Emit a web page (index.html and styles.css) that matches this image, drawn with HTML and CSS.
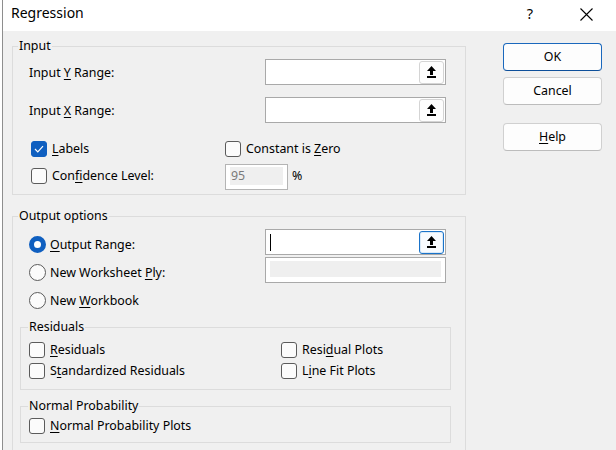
FILE: index.html
```html
<!DOCTYPE html>
<html lang="en">
<head>
<meta charset="utf-8">
<title>Regression</title>
<link rel="stylesheet" href="styles.css">
</head>
<body>
<div class="screen">
  <div class="edge"></div>
  <div class="dialog">
    <div class="titlebar">
      <span class="title">Regression</span>
      <span class="tb-help">?</span>
      <svg class="tb-close" width="13" height="13" viewBox="0 0 13 13"><path d="M0.5 0.5 L12.5 12.5 M12.5 0.5 L0.5 12.5" stroke="#000" stroke-width="1.1" fill="none"/></svg>
    </div>
    <div class="body">
      <div class="main">
        <fieldset class="group">
          <legend>Input</legend>
          <div class="range-row first">
            <span class="lbl">Input <u>Y</u> Range:</span>
            <div class="refbox">
              <span class="reftext"></span>
              <span class="refbtn"><svg width="9" height="12" viewBox="0 0 9 12"><path d="M4.5 0 L9 5 H6 V9 H3 V5 H0 Z" fill="#000"/><rect x="0" y="10" width="9" height="2" fill="#000"/></svg></span>
            </div>
          </div>
          <div class="range-row second">
            <span class="lbl">Input <u>X</u> Range:</span>
            <div class="refbox">
              <span class="reftext"></span>
              <span class="refbtn"><svg width="9" height="12" viewBox="0 0 9 12"><path d="M4.5 0 L9 5 H6 V9 H3 V5 H0 Z" fill="#000"/><rect x="0" y="10" width="9" height="2" fill="#000"/></svg></span>
            </div>
          </div>
          <div class="check-row labels-row">
            <label class="chk"><span class="box checked"><svg width="10" height="8" viewBox="0 0 10 8"><path d="M1 4 L3.8 6.8 L9 1.2" stroke="#fff" stroke-width="1.2" fill="none"/></svg></span><span><u>L</u>abels</span></label>
            <label class="chk"><span class="box"></span><span>Constant is <u>Z</u>ero</span></label>
          </div>
          <div class="check-row conf-row">
            <label class="chk"><span class="box"></span><span>Con<u>f</u>idence Level:</span></label>
            <div class="conf">
              <div class="numbox"><span class="numinner">95</span></div>
              <span class="pct">%</span>
            </div>
          </div>
        </fieldset>

        <fieldset class="group output">
          <legend>Output options</legend>
          <div class="radio-row first">
            <span class="rad"><span class="dot on"></span><span><u>O</u>utput Range:</span></span>
            <div class="refbox">
              <span class="reftext"><span class="caret"></span></span>
              <span class="refbtn focus"><svg width="9" height="12" viewBox="0 0 9 12"><path d="M4.5 0 L9 5 H6 V9 H3 V5 H0 Z" fill="#000"/><rect x="0" y="10" width="9" height="2" fill="#000"/></svg></span>
            </div>
          </div>
          <div class="radio-row">
            <span class="rad"><span class="dot"></span><span>New Worksheet <u>P</u>ly:</span></span>
            <div class="plybox"><span class="plyinner"></span></div>
          </div>
          <div class="radio-row">
            <span class="rad"><span class="dot"></span><span>New <u>W</u>orkbook</span></span>
          </div>

          <fieldset class="group sub residuals">
            <legend>Residuals</legend>
            <div class="sub-grid">
              <label class="chk"><span class="box"></span><span><u>R</u>esiduals</span></label>
              <label class="chk"><span class="box"></span><span>Resi<u>d</u>ual Plots</span></label>
              <label class="chk"><span class="box"></span><span>S<u>t</u>andardized Residuals</span></label>
              <label class="chk"><span class="box"></span><span>L<u>i</u>ne Fit Plots</span></label>
            </div>
          </fieldset>

          <fieldset class="group sub normal">
            <legend>Normal Probability</legend>
            <div class="sub-grid single">
              <label class="chk"><span class="box"></span><span><u>N</u>ormal Probability Plots</span></label>
            </div>
          </fieldset>
        </fieldset>
      </div>

      <div class="buttons">
        <span class="btn default">OK</span>
        <span class="btn">Cancel</span>
        <span class="btn help"><u>H</u>elp</span>
      </div>
    </div>
  </div>
</div>
</body>
</html>
```

FILE: styles.css
```css
* { box-sizing: border-box; }
html, body { margin: 0; padding: 0; }
body {
  width: 616px;
  height: 450px;
  overflow: hidden;
  font-family: "Segoe UI", "Noto Sans", sans-serif;
  font-size: 12.4px;
  color: #000;
  background: #f0f0f0;
}
u { text-decoration-thickness: 1px; text-underline-offset: 2px; }

.screen { display: flex; height: 450px; }
.edge { width: 3px; flex: none; background: #fff; border-right: 1px solid #8e8e8e; }
.dialog { flex: 1; display: flex; flex-direction: column; min-width: 0; }

.titlebar {
  height: 31px;
  flex: none;
  background: #fff;
  display: flex;
  align-items: flex-start;
  padding: 3px 23px 0 8px;
}
.title { font-size: 14px; line-height: 20px; }
.tb-help { margin-left: auto; font-size: 14.5px; line-height: 20px; }
.tb-close { margin: 5px 0 0 47px; }

.body {
  flex: 1;
  display: flex;
  align-items: flex-start;
  padding: 7px 0 0 9px;
  overflow: hidden;
  background: #f0f0f0;
}
.main { width: 454px; flex: none; }

.group {
  margin: 0;
  padding: 0;
  border: 1px solid #dcdcdc;
  min-width: 0;
}
.group legend {
  margin-left: 5px;
  padding: 0 1px;
  line-height: 16px;
}

/* Input ranges */
.range-row {
  display: grid;
  grid-template-columns: 236px 181px;
  align-items: center;
  height: 26px;
  padding-left: 16px;
}
.range-row.first { margin-top: 5px; }
.range-row.second { margin-top: 12px; }

.refbox {
  height: 26px;
  border: 1px solid #a9a9a9;
  background: #fff;
  display: flex;
  align-items: center;
  padding: 0 1px 0 4px;
}
.reftext { flex: 1; display: flex; align-items: center; height: 100%; }
.caret { width: 1px; height: 17px; background: #000; }
.refbtn {
  width: 25px;
  height: 23px;
  border: 1px solid #d4d4d4;
  border-radius: 3px;
  background: #fdfdfd;
  display: flex;
  align-items: center;
  justify-content: center;
}
.refbtn.focus {
  border-color: #1a73c9;
  box-shadow: inset 0 0 0 1px #d9e9f7;
  background: #f8fbfe;
}

/* checkboxes */
.check-row {
  display: grid;
  grid-template-columns: 194px 1fr;
  align-items: center;
  padding-left: 18px;
}
.labels-row { height: 20px; margin-top: 16px; }
.conf-row { height: 26px; margin-top: 5px; margin-bottom: 4px; }
.conf-row > .chk { margin-bottom: 2px; }

.chk { display: flex; align-items: center; gap: 5px; line-height: 16px; }
.box {
  width: 16px;
  height: 16px;
  flex: none;
  border: 1px solid #5b5b5b;
  border-radius: 3px;
  background: #fbfbfb;
  display: flex;
  align-items: center;
  justify-content: center;
}
.box.checked { background: #0f5fc0; border-color: #0f5fc0; }

.conf { display: flex; align-items: center; gap: 4px; }
.numbox {
  width: 63px;
  height: 26px;
  border: 1px solid #b4b4b4;
  background: #fff;
  padding: 2px 4px 4px 4px;
  display: flex;
}
.numinner {
  flex: 1;
  background: #efefef;
  color: #7a7a7a;
  line-height: 18px;
  padding-left: 1px;
}
.pct { line-height: 16px; margin-bottom: 3px; }

/* output */
.output { margin-top: 13px; padding-bottom: 14px; }
.radio-row {
  display: grid;
  grid-template-columns: 236px 181px;
  align-items: center;
  height: 26px;
  padding-left: 16px;
  margin-top: 2px;
}
.radio-row.first { margin-top: 5px; }
.rad { display: flex; align-items: center; gap: 4px; padding-top: 5px; line-height: 16px; }
.dot {
  width: 17px;
  height: 17px;
  flex: none;
  border: 1px solid #5b5b5b;
  border-radius: 50%;
  background: #fbfbfb;
}
.dot.on {
  border: 5px solid #0f5fc0;
  background: #fff;
}
.plybox {
  height: 26px;
  border: 1px solid #a9a9a9;
  background: #fff;
  padding: 3px 4px 5px 4px;
  display: flex;
}
.plyinner { flex: 1; background: #efefef; }

.sub { margin: 8px 0 0 7px; width: 431px; }
.sub legend { margin-left: 7px; }
.sub-grid {
  display: grid;
  grid-template-columns: 252px 1fr;
  grid-auto-rows: 21px;
  align-items: center;
  padding-left: 8px;
  margin-top: 4px;
  padding-bottom: 8px;
}
.sub-grid.single { margin-top: 1px; padding-bottom: 6px; }

/* buttons */
.buttons {
  margin: 5px 0 0 37px;
  width: 99px;
  display: flex;
  flex-direction: column;
  flex: none;
}
.btn {
  height: 28px;
  border: 1px solid #d0d0d0;
  border-bottom-color: #bcbcbc;
  border-radius: 4px;
  background: #fdfdfd;
  display: flex;
  align-items: center;
  justify-content: center;
  line-height: 16px;
}
.btn + .btn { margin-top: 6px; }
.btn.default { border-color: #1a68bd; border-bottom-color: #0d4f9a; }
.btn.help { margin-top: 18px; }
```
